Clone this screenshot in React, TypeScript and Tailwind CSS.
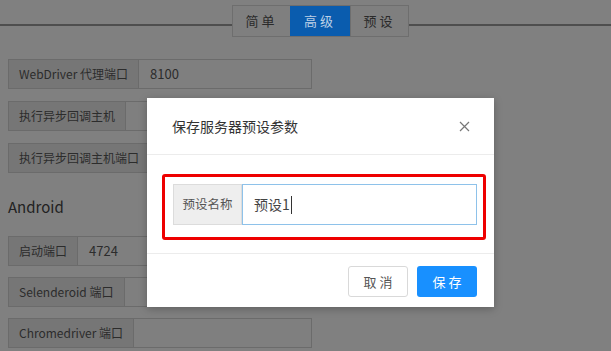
import React from 'react';

const font = { fontFamily: '"Noto Sans CJK SC", "Noto Sans", sans-serif' };

const FieldRow = ({ label, value }: { label: string; value?: string }) => (
  <div className="flex w-[304px] h-[30px] text-[12px]">
    <div className="flex items-center px-[10px] bg-[#767676] border border-[#6b6b6b] text-[#2c2c2c] whitespace-nowrap">
      {label}
    </div>
    <div className="flex-1 flex items-center px-[11px] bg-[#7f7f7f] border border-l-0 border-[#6b6b6b] text-[#2c2c2c] text-[13px]">
      {value}
    </div>
  </div>
);

const App: React.FC = () => {
  return (
    <div className="relative w-[611px] h-[351px] overflow-hidden bg-[#808080]" style={font}>
      {/* tab bar */}
      <div className="flex items-start">
        <div className="w-[232px] h-[2px] mt-[24px] bg-[#4e4e4e]"></div>
        <div className="flex mt-[5px] h-[32px] border border-[#6e6e6e] bg-[#7f7f7f] text-[13px]">
          <div className="w-[57px] flex items-center justify-center text-[#2a2a2a] tracking-[3px]">简单</div>
          <div className="w-[60px] flex items-center justify-center bg-[#0a5cae] text-[#bcd0e6] tracking-[3px]">高级</div>
          <div className="w-[58px] flex items-center justify-center text-[#2a2a2a] border-l border-[#6e6e6e] tracking-[3px]">预设</div>
        </div>
        <div className="flex-1 h-[2px] mt-[24px] bg-[#4e4e4e]"></div>
      </div>

      {/* background form */}
      <div className="px-[8px] pt-[22px] flex flex-col">
        <div className="flex flex-col gap-[12px]">
          <FieldRow label="WebDriver 代理端口" value="8100" />
          <FieldRow label="执行异步回调主机" />
          <FieldRow label="执行异步回调主机端口" />
        </div>
        <div className="mt-[23px] mb-[17px] text-[15px] text-[#222]">Android</div>
        <div className="flex flex-col gap-[11px]">
          <FieldRow label="启动端口" value="4724" />
          <FieldRow label="Selenderoid 端口" />
          <FieldRow label="Chromedriver 端口" />
        </div>
      </div>

      {/* modal */}
      <div className="absolute inset-0">
        <div className="absolute left-[147px] top-[98px] w-[347px] bg-white shadow-[0_2px_8px_rgba(0,0,0,0.25)]">
          <div className="h-[57px] flex items-center justify-between pl-[25px] pr-[24px] border-b border-[#ececec]">
            <span className="text-[14px] text-[#333]">保存服务器预设参数</span>
            <svg width="11" height="11" viewBox="0 0 11 11" className="text-[#777]">
              <path d="M1 1L10 10M10 1L1 10" stroke="currentColor" strokeWidth="1.2" />
            </svg>
          </div>
          <div className="pt-[19px] pb-[13px] pl-[15px] pr-[8px]">
            <div className="border-[3px] border-[#e00] rounded-[3px] pt-[7px] pb-[12px] pl-[8px] pr-[6px]">
              <div className="flex h-[41px]">
                <div className="w-[69px] flex items-center justify-center bg-[#eeeeee] border border-[#dcdcdc] text-[12.5px] text-[#555]">
                  预设名称
                </div>
                <div className="flex-1 flex items-center pl-[11px] border border-[#8ec2ea] text-[14px] text-[#444]">
                  预设1<span className="inline-block w-[1px] h-[18px] bg-[#333] ml-[1px]"></span>
                </div>
              </div>
            </div>
          </div>
          <div className="border-t border-[#ececec] pt-[12px] pb-[10px] pr-[17px] flex justify-end gap-[9px]">
            <button className="w-[60px] h-[31px] border border-[#d9d9d9] rounded-[3px] bg-white text-[13px] text-[#555]">
              取 消
            </button>
            <button className="w-[60px] h-[31px] rounded-[3px] bg-[#1890ff] text-[13px] text-white">
              保 存
            </button>
          </div>
        </div>
      </div>
    </div>
  );
};

export default App;
